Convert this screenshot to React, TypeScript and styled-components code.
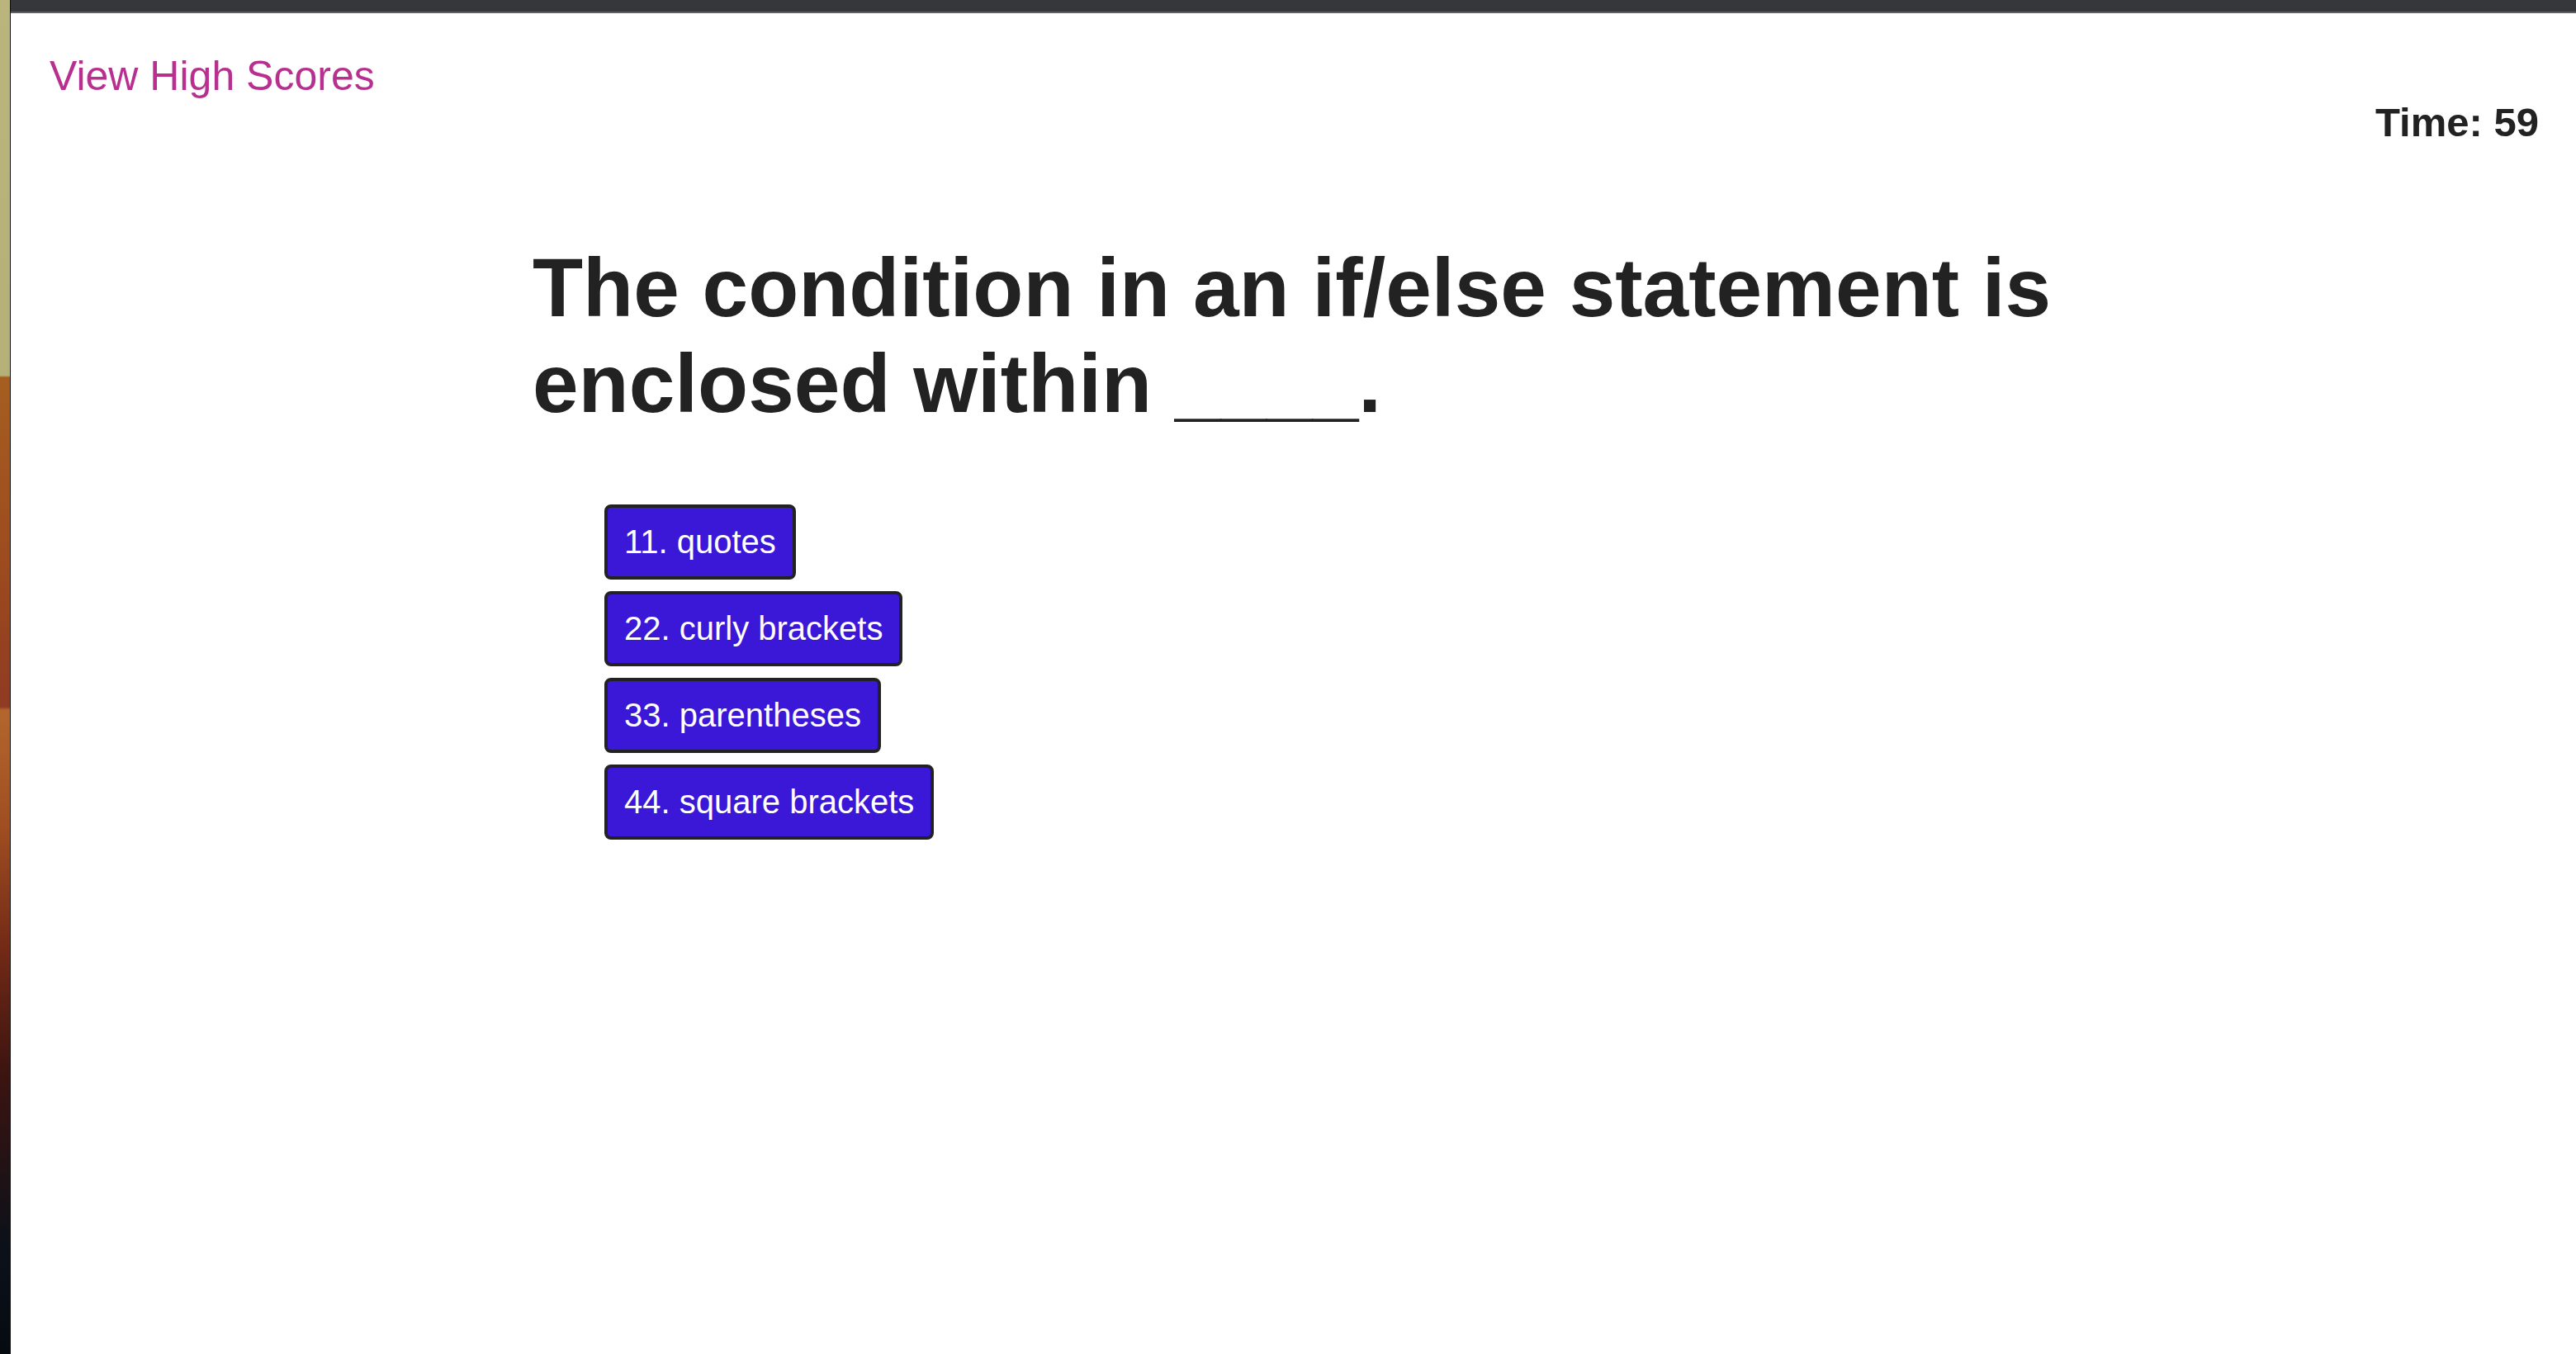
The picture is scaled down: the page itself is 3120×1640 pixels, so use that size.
import { createGlobalStyle, styled } from "styled-components";

const answers = ["quotes", "curly brackets", "parentheses", "square brackets"];

function App() {
  return (
    <>
      <GlobalStyle />
      <StPage>
        <StDesktopEdge />
        <StWindow>
          <StTitleBar />
          <StHeader>
            <StHighScoresLink href="#">View High Scores</StHighScoresLink>
            <StTimer>Time: 59</StTimer>
          </StHeader>
          <StQuiz>
            <StQuestion>
              The condition in an if/else statement is enclosed within ____.
            </StQuestion>
            <StAnswerList>
              {answers.map((answer, i) => (
                <StAnswerButton key={answer}>
                  {`${i + 1}${i + 1}. ${answer}`}
                </StAnswerButton>
              ))}
            </StAnswerList>
          </StQuiz>
        </StWindow>
      </StPage>
    </>
  );
}

export default App;

const GlobalStyle = createGlobalStyle`
  html, body {
    margin: 0;
    padding: 0;
    height: 100%;
    background: #ffffff;
    font-family: "Liberation Sans", Arial, sans-serif;
  }
`;

const StAnswerButton = styled.button`
  font-family: "Liberation Sans", Arial, sans-serif;
  font-size: 40px;
  line-height: 46px;
  color: #ffffff;
  background-color: #3b17d8;
  border: 4px solid #222222;
  border-radius: 8px;
  padding: 18px 20px 19px;
  cursor: pointer;
`;

const StAnswerList = styled.div`
  display: flex;
  flex-direction: column;
  align-items: flex-start;
  gap: 14px;
  margin-top: 89px;
  padding-left: 87px;
`;

const StQuestion = styled.h1`
  margin: 0;
  max-width: 1900px;
  font-size: 100px;
  line-height: 116px;
  font-weight: 700;
  color: #222222;
`;

const StQuiz = styled.main`
  display: flex;
  flex-direction: column;
  padding-left: 632px;
  margin-top: 114px;
`;

const StTimer = styled.div`
  margin-top: 57px;
  font-size: 49px;
  font-weight: 700;
  color: #222222;
`;

const StHighScoresLink = styled.a`
  font-size: 50px;
  color: #b8308f;
  text-decoration: none;
`;

const StHeader = styled.header`
  display: flex;
  justify-content: space-between;
  align-items: flex-start;
  padding: 47px 45px 0 47px;
`;

const StTitleBar = styled.div`
  height: 14px;
  background-color: #36373b;
  border-bottom: 2px solid #5e5f63;
`;

const StWindow = styled.div`
  flex: 1;
  display: flex;
  flex-direction: column;
  background: #ffffff;
`;

const StDesktopEdge = styled.div`
  width: 12px;
  flex-shrink: 0;
  border-right: 1px solid #111111;
  background: linear-gradient(
    to bottom,
    #bab47d 0,
    #b5af78 455px,
    #a65e1f 457px,
    #9d4b1f 680px,
    #8f3a22 856px,
    #b3662c 860px,
    #a04e22 1000px,
    #722a16 1150px,
    #3c1410 1300px,
    #0d1119 1500px,
    #060b12 100%
  );
`;

const StPage = styled.div`
  display: flex;
  min-height: 100vh;
`;
